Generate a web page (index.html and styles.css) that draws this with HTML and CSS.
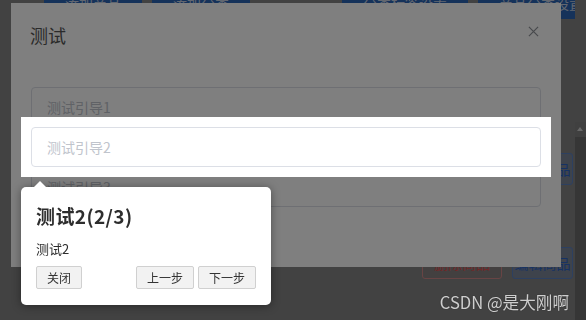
FILE: index.html
```html
<!DOCTYPE html>
<html lang="zh-CN">
<head>
    <meta charset="UTF-8">
    <meta name="viewport" content="width=device-width, initial-scale=1.0">
    <title>引导测试</title>
    <link rel="stylesheet" href="styles.css">
</head>
<body>
    <div class="page">
        <main class="main">
            <div class="toolbar">
                <div class="btn-group">
                    <button class="btn-primary">添加商品</button>
                    <button class="btn-primary">添加分类</button>
                </div>
                <div class="btn-group">
                    <button class="btn-primary wide">分类标签设置</button>
                    <button class="btn-primary wide">商品分类设置</button>
                </div>
            </div>
            <div class="rows">
                <div class="row">
                    <button class="btn-plain blue">编辑商品</button>
                </div>
                <div class="row">
                    <button class="btn-plain red">删除商品</button>
                    <button class="btn-plain blue">编辑商品</button>
                </div>
            </div>
        </main>
        <aside class="scrollbar">
            <span class="scroll-up"></span>
        </aside>
    </div>

    <!-- dialog -->
    <div class="dialog">
        <div class="dialog-header">
            <span class="dialog-title">测试</span>
            <button class="dialog-close" aria-label="关闭">
                <svg width="12" height="12" viewBox="0 0 12 12"><path d="M1 1L11 11M11 1L1 11" stroke="#909399" stroke-width="1.3" fill="none"/></svg>
            </button>
        </div>
        <div class="dialog-body">
            <div class="field"><input type="text" placeholder="测试引导1"></div>
            <div class="field is-guided"><input type="text" placeholder="测试引导2"></div>
            <div class="field"><input type="text" placeholder="测试引导3"></div>
        </div>
    </div>

    <!-- guide -->
    <div class="guide-overlay"></div>
    <div class="guide-popover">
        <h3 class="guide-title">测试2(2/3)</h3>
        <p class="guide-desc">测试2</p>
        <div class="guide-footer">
            <button class="guide-btn">关闭</button>
            <div class="guide-nav">
                <button class="guide-btn">上一步</button>
                <button class="guide-btn">下一步</button>
            </div>
        </div>
    </div>

    <div class="watermark">CSDN @是大刚啊</div>
</body>
</html>
```

FILE: styles.css
```css
body {
    margin: 0;
    width: 586px;
    height: 320px;
    overflow: hidden;
    position: relative;
    background-color: #848484;
    font-family: "Noto Sans CJK SC", "Noto Sans", sans-serif;
    color: #303133;
}
button {
    font-family: inherit;
    cursor: pointer;
}
.page {
    display: flex;
    height: 100%;
}
.main {
    flex: 1;
    min-width: 0;
    overflow: hidden;
    padding-right: 2px;
}
.toolbar {
    display: flex;
    margin-top: -13px;
    padding-left: 44px;
}
.btn-group {
    display: flex;
    flex-shrink: 0;
    gap: 10px;
}
.btn-group + .btn-group {
    margin-left: 92px;
}
.btn-primary {
    flex-shrink: 0;
    width: 98px;
    height: 32px;
    border: none;
    border-radius: 3px;
    background-color: #2a64b4;
    color: #c4cee0;
    font-size: 14px;
}
.btn-primary.wide {
    width: 126px;
}
.rows {
    margin-top: 103px;
}
.row {
    height: 94px;
    display: flex;
    justify-content: flex-end;
    align-items: center;
    gap: 10px;
}
.btn-plain {
    flex-shrink: 0;
    height: 32px;
    padding: 0;
    border-radius: 3px;
    font-size: 14px;
    white-space: nowrap;
}
.btn-plain.blue {
    width: 61px;
    border: 1px solid #5a80c0;
    background-color: #7c8698;
    color: #2c64c8;
}
.btn-plain.red {
    width: 80px;
    border: 1px solid #d08888;
    background-color: #868080;
    color: #e05050;
}
.scrollbar {
    width: 11px;
    flex-shrink: 0;
    margin-top: 122px;
    display: flex;
    flex-direction: column;
    background-color: #6c6c6c;
}
.scroll-up {
    height: 15px;
    background-color: #808080;
    position: relative;
}
.scroll-up::after {
    content: "";
    position: absolute;
    left: 2px;
    top: 5px;
    border: 3.5px solid transparent;
    border-bottom: 4px solid #d0d0d0;
    border-top: none;
}

/* dialog */
.dialog {
    position: absolute;
    left: 11px;
    top: 3px;
    width: 550px;
    height: 264px;
    background-color: #fff;
    box-sizing: border-box;
}
.dialog-header {
    padding: 20px 20px 10px 19px;
    display: flex;
    justify-content: space-between;
}
.dialog-title {
    font-size: 18px;
    line-height: 24px;
    color: #555;
}
.dialog-close {
    width: 16px;
    height: 16px;
    padding: 0;
    border: none;
    background: none;
    display: flex;
    align-items: center;
    justify-content: center;
}
.dialog-close svg {
    width: 11px;
    height: 11px;
}
.dialog-body {
    padding: 30px 20px 0 20px;
}
.field input {
    display: block;
    width: 100%;
    height: 40px;
    box-sizing: border-box;
    padding: 0 15px;
    border: 1px solid #dcdfe6;
    border-radius: 4px;
    background-color: #fff;
    font-family: inherit;
    font-size: 14px;
    outline: none;
}
.field input::placeholder {
    color: #c0c4cc;
}

/* guide */
.guide-overlay {
    position: fixed;
    inset: 0;
    background-color: rgba(0, 0, 0, 0.5);
    z-index: 100;
}
.field.is-guided {
    position: relative;
    z-index: 101;
}
.field.is-guided::before {
    content: "";
    position: absolute;
    inset: -10px;
    background-color: #fff;
    z-index: -1;
}
.guide-popover {
    position: absolute;
    left: 21px;
    top: 187px;
    width: 250px;
    box-sizing: border-box;
    padding: 17px 15px 16px;
    background-color: #fff;
    border-radius: 5px;
    box-shadow: 0 1px 10px rgba(0, 0, 0, 0.4);
    z-index: 102;
}
.guide-popover::before {
    content: "";
    position: absolute;
    left: 13px;
    top: -6px;
    border-left: 6px solid transparent;
    border-right: 6px solid transparent;
    border-bottom: 6px solid #fff;
}
.guide-title {
    margin: 0;
    font-size: 19px;
    line-height: 24px;
    letter-spacing: 0.4px;
    font-weight: bold;
    color: #2d2d2d;
}
.guide-desc {
    margin: 11px 0 0;
    font-size: 13px;
    line-height: 20px;
    color: #2d2d2d;
}
.guide-footer {
    margin-top: 7px;
    display: flex;
    justify-content: space-between;
}
.guide-nav {
    display: flex;
    gap: 4px;
}
.guide-btn {
    height: 23px;
    padding: 0 10px;
    border: 1px solid #d0d0d0;
    border-radius: 2px;
    background-color: #f2f2f2;
    color: #333;
    font-size: 12px;
    line-height: 21px;
}

.watermark {
    position: absolute;
    right: 17px;
    bottom: 8px;
    font-size: 16.6px;
    line-height: 20px;
    color: rgba(255, 255, 255, 0.78);
    text-shadow: 0 0 1px rgba(0, 0, 0, 0.6);
    z-index: 200;
}
```
